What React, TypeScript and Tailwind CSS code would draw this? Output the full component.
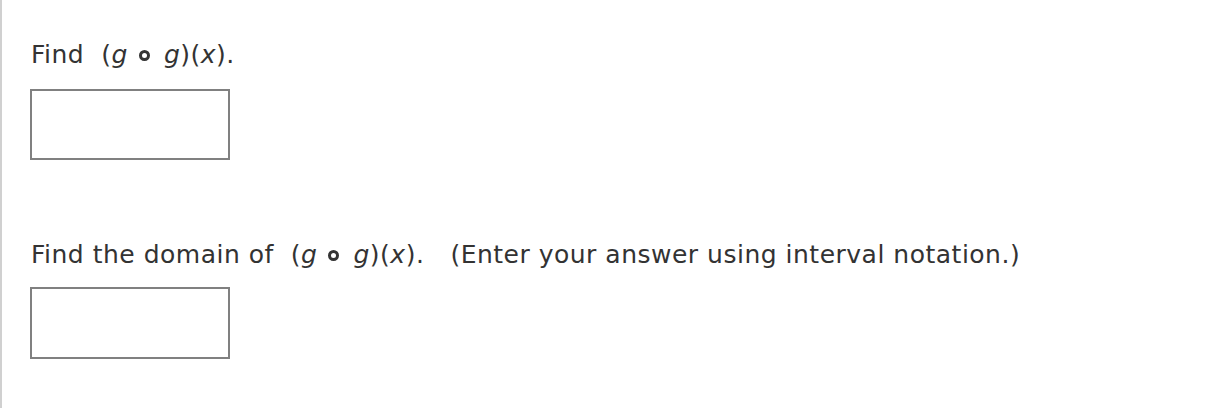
export default function App() {
    const expr = (
        <span className="ml-[17px]">
            (<i className="mr-[3px]">g</i>
            <span className="ml-[8px] mr-[14px] inline-block h-[11px] w-[11px] translate-y-[-2px] rounded-full border-[3px] border-[#333]" />
            <i>g</i>)(<i>x</i>)
        </span>
    )

    return (
        <div className="h-[408px] w-[1212px] border-l-2 border-[#d0d0d0] bg-white font-['DejaVu_Sans',Verdana,sans-serif] text-[25px] leading-none tracking-[0.5px] text-[#333]">
            <div className="pl-[28px] pt-[42px]">
                <p className="h-[28px] pl-px">Find{expr}.</p>
                <div className="mt-[19px] h-[71px] w-[200px] border-2 border-[#808080]" />

                <p className="mt-[82px] h-[28px] pl-px">
                    Find the domain of{expr}.
                    <span className="ml-[26px]">(Enter your answer using interval notation.)</span>
                </p>
                <div className="mt-[17px] h-[72px] w-[200px] border-2 border-[#808080]" />
            </div>
        </div>
    )
}
